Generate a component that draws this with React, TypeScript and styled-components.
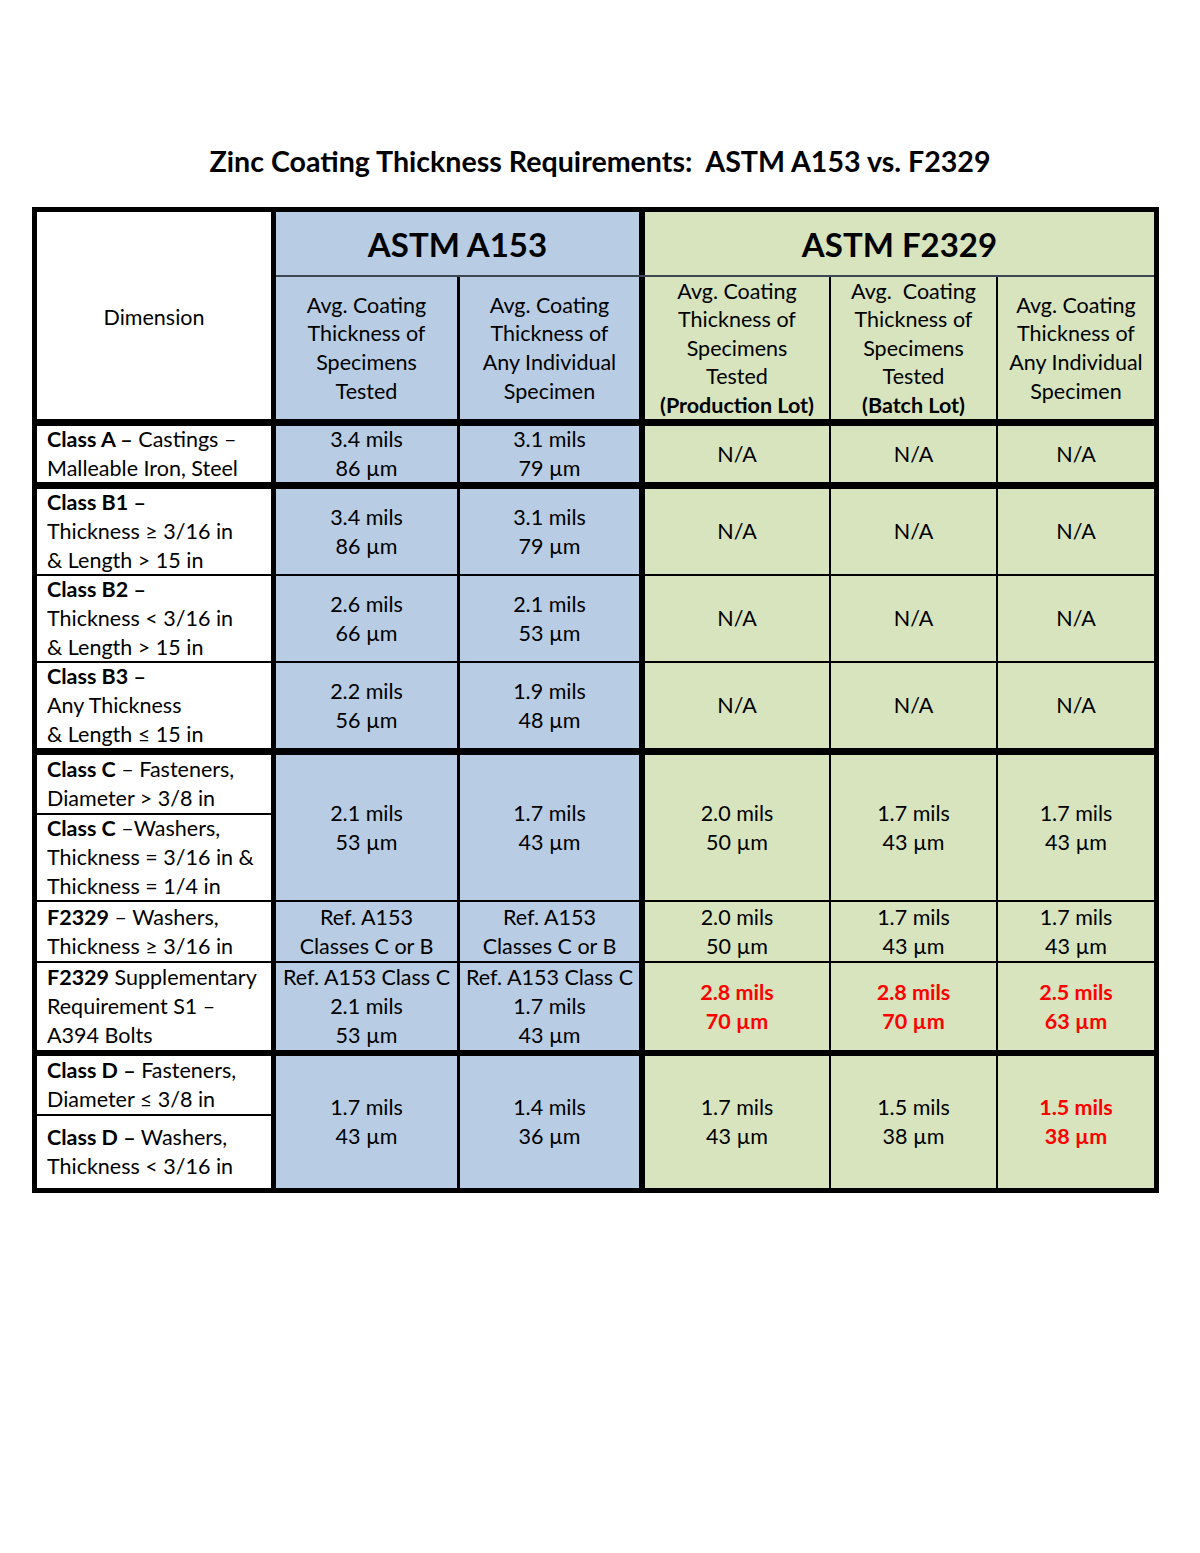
import React from "react";
import styled, { createGlobalStyle } from "styled-components";

const Global = createGlobalStyle`
  html, body { margin: 0; padding: 0; background: #ffffff; }
  body { font-family: Lato, "Open Sans", "Liberation Sans", sans-serif; color: #000; }
`;

const Page = styled.div`
  width: 1200px;
  height: 1553px;
  box-sizing: border-box;
  padding-top: 140px;
  background: #fff;
`;

const Title = styled.h1`
  margin: 0 0 25px 0;
  height: 42px;
  line-height: 42px;
  font-size: 28.6px;
  font-weight: 700;
  text-align: center;
  white-space: pre;
  color: #000;
`;

const Table = styled.div`
  display: grid;
  width: max-content;
  margin-left: 32px;
  padding: 5px;
  background: #000;
  grid-template-columns: 234px 5px 181px 3px 179px 6px 184px 2px 165px 2px 156px;
  grid-template-rows:
    63px 2px 142px 7px 56px 7px 85px 2px 85px 2px 85px 7px
    58px 2px 85px 2px 59px 2px 87px 6px 58px 2px 72px;
`;

type Tone = "white" | "blue" | "green";
const toneColor: Record<Tone, string> = {
  white: "#ffffff",
  blue: "#b8cce4",
  green: "#d7e4bd",
};

const Cell = styled.div<{ $col: string; $row: string; $tone: Tone }>`
  grid-column: ${(p) => p.$col};
  grid-row: ${(p) => p.$row};
  background: ${(p) => toneColor[p.$tone]};
  display: flex;
  flex-direction: column;
  justify-content: center;
  align-items: center;
  text-align: center;
  white-space: pre;
  font-size: 21.5px;
  line-height: 29px;
  min-width: 0;
  min-height: 0;
`;

const SectionHead = styled(Cell)`
  font-size: 33px;
  font-weight: 700;
  line-height: 40px;
`;

const SubHead = styled(Cell)`
  line-height: 28.6px;
`;

const DimHead = styled(Cell)`
  padding-top: 4px;
`;

const LeftCell = styled(Cell)`
  align-items: flex-start;
  text-align: left;
  padding-left: 10px;
`;

const ValueCell = styled(Cell)<{ $red?: boolean }>`
  color: ${(p) => (p.$red ? "#ff0000" : "#000")};
  font-weight: ${(p) => (p.$red ? 700 : 400)};
`;

const Rule = styled.div<{ $col: string; $row: string }>`
  grid-column: ${(p) => p.$col};
  grid-row: ${(p) => p.$row};
  background: #3d4651;
`;

const Line = styled.span`
  display: block;
`;

const B = styled.strong`
  font-weight: 700;
`;

const COLS = ["1", "3", "5", "7", "9", "11"];

type Val = { lines: string[]; red?: boolean };
const NA: Val = { lines: ["N/A"] };
const v = (...lines: string[]): Val => ({ lines });
const r = (...lines: string[]): Val => ({ lines, red: true });

const leftRows: { row: string; lines: React.ReactNode[] }[] = [
  { row: "5 / 6", lines: [<><B>Class A –</B> Castings –</>, "Malleable Iron, Steel"] },
  { row: "7 / 8", lines: [<B>Class B1 –</B>, "Thickness ≥ 3/16 in", "& Length > 15 in"] },
  { row: "9 / 10", lines: [<B>Class B2 –</B>, "Thickness < 3/16 in", "& Length > 15 in"] },
  { row: "11 / 12", lines: [<B>Class B3 –</B>, "Any Thickness", "& Length ≤ 15 in"] },
  { row: "13 / 14", lines: [<><B>Class C</B> – Fasteners,</>, "Diameter > 3/8 in"] },
  { row: "15 / 16", lines: [<><B>Class C</B> –Washers,</>, "Thickness = 3/16 in &", "Thickness = 1/4 in"] },
  { row: "17 / 18", lines: [<><B>F2329</B> – Washers,</>, "Thickness ≥ 3/16 in"] },
  { row: "19 / 20", lines: [<><B>F2329</B> Supplementary</>, "Requirement S1 –", "A394 Bolts"] },
  { row: "21 / 22", lines: [<><B>Class D –</B> Fasteners,</>, "Diameter ≤ 3/8 in"] },
  { row: "23 / 24", lines: [<><B>Class D –</B> Washers,</>, "Thickness < 3/16 in"] },
];

const dataRows: { row: string; values: Val[] }[] = [
  { row: "5 / 6", values: [v("3.4 mils", "86 µm"), v("3.1 mils", "79 µm"), NA, NA, NA] },
  { row: "7 / 8", values: [v("3.4 mils", "86 µm"), v("3.1 mils", "79 µm"), NA, NA, NA] },
  { row: "9 / 10", values: [v("2.6 mils", "66 µm"), v("2.1 mils", "53 µm"), NA, NA, NA] },
  { row: "11 / 12", values: [v("2.2 mils", "56 µm"), v("1.9 mils", "48 µm"), NA, NA, NA] },
  {
    row: "13 / 16",
    values: [
      v("2.1 mils", "53 µm"),
      v("1.7 mils", "43 µm"),
      v("2.0 mils", "50 µm"),
      v("1.7 mils", "43 µm"),
      v("1.7 mils", "43 µm"),
    ],
  },
  {
    row: "17 / 18",
    values: [
      v("Ref. A153", "Classes C or B"),
      v("Ref. A153", "Classes C or B"),
      v("2.0 mils", "50 µm"),
      v("1.7 mils", "43 µm"),
      v("1.7 mils", "43 µm"),
    ],
  },
  {
    row: "19 / 20",
    values: [
      v("Ref. A153 Class C", "2.1 mils", "53 µm"),
      v("Ref. A153 Class C", "1.7 mils", "43 µm"),
      r("2.8 mils", "70 µm"),
      r("2.8 mils", "70 µm"),
      r("2.5 mils", "63 µm"),
    ],
  },
  {
    row: "21 / 24",
    values: [
      v("1.7 mils", "43 µm"),
      v("1.4 mils", "36 µm"),
      v("1.7 mils", "43 µm"),
      v("1.5 mils", "38 µm"),
      r("1.5 mils", "38 µm"),
    ],
  },
];

const subHeads: { tone: Tone; lines: React.ReactNode[] }[] = [
  { tone: "blue", lines: ["Avg. Coating", "Thickness of", "Specimens", "Tested"] },
  { tone: "blue", lines: ["Avg. Coating", "Thickness of", "Any Individual", "Specimen"] },
  { tone: "green", lines: ["Avg. Coating", "Thickness of", "Specimens", "Tested", <B>(Production Lot)</B>] },
  { tone: "green", lines: ["Avg.  Coating", "Thickness of", "Specimens", "Tested", <B>(Batch Lot)</B>] },
  { tone: "green", lines: ["Avg. Coating", "Thickness of", "Any Individual", "Specimen"] },
];

export default function App() {
  return (
    <Page>
      <Global />
      <Title>{"Zinc Coating Thickness Requirements:  ASTM A153 vs. F2329"}</Title>
      <Table>
        <DimHead $col="1" $row="1 / 4" $tone="white">
          Dimension
        </DimHead>
        <SectionHead $col="3 / 6" $row="1 / 2" $tone="blue">
          ASTM A153
        </SectionHead>
        <SectionHead $col="7 / 12" $row="1 / 2" $tone="green">
          ASTM F2329
        </SectionHead>
        <Rule $col="3 / 12" $row="2 / 3" />
        {subHeads.map((h, i) => (
          <SubHead key={i} $col={COLS[i + 1]} $row="3 / 4" $tone={h.tone}>
            {h.lines.map((l, j) => (
              <Line key={j}>{l}</Line>
            ))}
          </SubHead>
        ))}
        {leftRows.map((lr) => (
          <LeftCell key={lr.row} $col="1" $row={lr.row} $tone="white">
            {lr.lines.map((l, j) => (
              <Line key={j}>{l}</Line>
            ))}
          </LeftCell>
        ))}
        {dataRows.map((dr) =>
          dr.values.map((val, i) => (
            <ValueCell
              key={dr.row + i}
              $col={COLS[i + 1]}
              $row={dr.row}
              $tone={i < 2 ? "blue" : "green"}
              $red={val.red}
            >
              {val.lines.map((l, j) => (
                <Line key={j}>{l}</Line>
              ))}
            </ValueCell>
          ))
        )}
      </Table>
    </Page>
  );
}
